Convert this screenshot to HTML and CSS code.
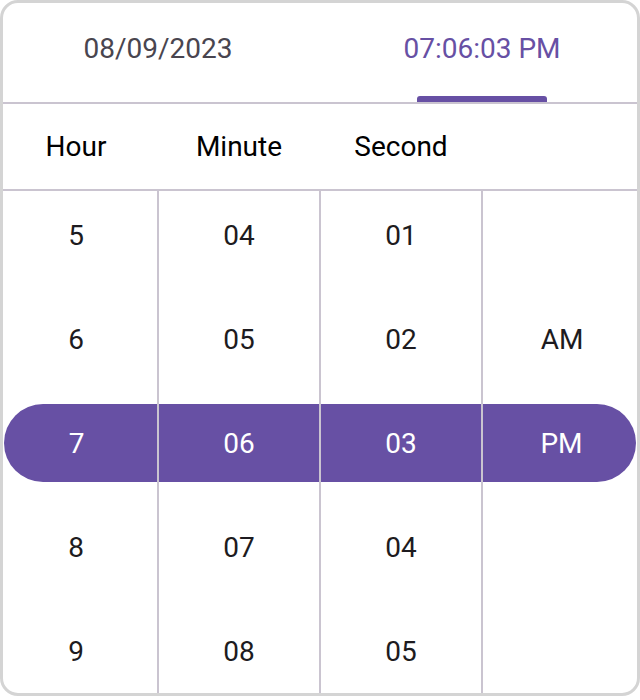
FILE: index.html
```html
<!DOCTYPE html>
<html lang="en">
<head>
    <meta charset="UTF-8">
    <meta name="viewport" content="width=device-width, initial-scale=1.0">
    <title>Date Time Picker</title>
    <link rel="stylesheet" href="styles.css">
</head>
<body>
    <div class="picker">
        <div class="tabs">
            <div class="tab">
                <span class="tab-text">08/09/2023</span>
            </div>
            <div class="tab active">
                <span class="tab-text">07:06:03 PM</span>
                <span class="indicator"></span>
            </div>
        </div>

        <div class="labels">
            <div class="label col-hour">Hour</div>
            <div class="label">Minute</div>
            <div class="label">Second</div>
            <div class="label col-ampm"></div>
        </div>

        <div class="wheel">
            <div class="col col-hour">
                <div class="item">5</div>
                <div class="item">6</div>
                <div class="item sel">7</div>
                <div class="item">8</div>
                <div class="item">9</div>
            </div>
            <div class="col">
                <div class="item">04</div>
                <div class="item">05</div>
                <div class="item sel">06</div>
                <div class="item">07</div>
                <div class="item">08</div>
            </div>
            <div class="col">
                <div class="item">01</div>
                <div class="item">02</div>
                <div class="item sel">03</div>
                <div class="item">04</div>
                <div class="item">05</div>
            </div>
            <div class="col col-ampm">
                <div class="item"></div>
                <div class="item">AM</div>
                <div class="item sel">PM</div>
                <div class="item"></div>
                <div class="item"></div>
            </div>
        </div>
    </div>
</body>
</html>
```

FILE: styles.css
```css
body {
    margin: 0;
    background-color: #fff;
    font-family: Roboto, "Liberation Sans", sans-serif;
    color: #1d1b20;
}
.picker {
    box-sizing: border-box;
    width: 640px;
    height: 696px;
    border: 3px solid #d4d4d4;
    border-radius: 18px;
    background-color: #fff;
    overflow: hidden;
    display: flex;
    flex-direction: column;
}

/* tabs */
.tabs {
    display: grid;
    grid-template-columns: 310px 1fr;
    height: 99px;
    border-bottom: 2px solid #cac4d0;
}
.tab {
    display: flex;
    flex-direction: column;
    align-items: center;
    padding-top: 29px;
    font-size: 28px;
    color: #49454f;
}
.tab.active {
    color: #6750a4;
    padding-left: 14px;
}
.indicator {
    margin-top: auto;
    width: 130px;
    height: 6px;
    background-color: #6750a4;
    border-radius: 3px 3px 0 0;
}

/* column labels */
.labels,
.wheel {
    display: grid;
    grid-template-columns: 154px 162px 162px 1fr;
}
.labels {
    height: 85px;
    border-bottom: 2px solid #cac4d0;
}
.label {
    display: flex;
    align-items: center;
    justify-content: center;
    font-size: 28px;
    color: #000;
    padding-left: 2px;
}
.label.col-hour {
    padding-left: 0;
    padding-right: 8px;
}

/* wheel */
.wheel {
    flex: 1;
    overflow: hidden;
}
.col {
    display: flex;
    flex-direction: column;
    border-left: 2px solid #cac4d0;
}
.col.col-hour {
    border-left: none;
}
.item {
    flex: none;
    height: 104px;
    display: flex;
    align-items: center;
    justify-content: center;
    font-size: 28px;
}
.item:first-child {
    margin-top: -8px;
}
.col-hour .item {
    padding-right: 8px;
}
.col-ampm .item {
    padding-left: 4px;
}
.item.sel {
    height: 78px;
    margin: 13px 0;
    background-color: #6750a4;
    color: #fff;
}
.col-hour .item.sel {
    margin-left: 1px;
    border-radius: 39px 0 0 39px;
}
.col-ampm .item.sel {
    margin-right: 1px;
    border-radius: 0 39px 39px 0;
}
```
